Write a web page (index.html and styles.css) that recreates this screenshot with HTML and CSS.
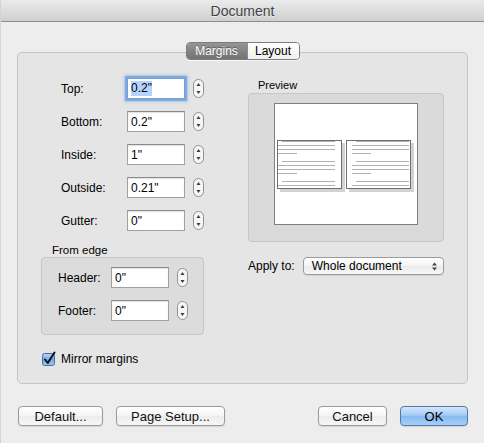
FILE: index.html
```html
<!DOCTYPE html>
<html>
<head>
<meta charset="utf-8">
<title>Document</title>
<link rel="stylesheet" href="styles.css">
</head>
<body>
<div class="window">
  <div class="titlebar">Document</div>
  <div class="body">
    <div class="tabs">
      <div class="seg">
        <div class="seg-item active">Margins</div>
        <div class="seg-item plain">Layout</div>
      </div>
    </div>
    <div class="tabbox">
      <div class="col-left">
        <div class="margin-rows">
          <div class="frow"><span class="lbl">Top:</span><div class="field focus"><span class="sel">0.2"</span></div><svg class="stepper" width="11" height="19" viewBox="0 0 11 19"><rect x="0.5" y="0.5" width="10" height="18" rx="5" class="st-body"/><polygon points="3.5,7 7.5,7 5.5,4" class="st-arr"/><polygon points="3.5,12 7.5,12 5.5,15" class="st-arr"/></svg></div>
          <div class="frow"><span class="lbl">Bottom:</span><div class="field">0.2"</div><svg class="stepper" width="11" height="19" viewBox="0 0 11 19"><rect x="0.5" y="0.5" width="10" height="18" rx="5" class="st-body"/><polygon points="3.5,7 7.5,7 5.5,4" class="st-arr"/><polygon points="3.5,12 7.5,12 5.5,15" class="st-arr"/></svg></div>
          <div class="frow"><span class="lbl">Inside:</span><div class="field">1"</div><svg class="stepper" width="11" height="19" viewBox="0 0 11 19"><rect x="0.5" y="0.5" width="10" height="18" rx="5" class="st-body"/><polygon points="3.5,7 7.5,7 5.5,4" class="st-arr"/><polygon points="3.5,12 7.5,12 5.5,15" class="st-arr"/></svg></div>
          <div class="frow"><span class="lbl">Outside:</span><div class="field">0.21"</div><svg class="stepper" width="11" height="19" viewBox="0 0 11 19"><rect x="0.5" y="0.5" width="10" height="18" rx="5" class="st-body"/><polygon points="3.5,7 7.5,7 5.5,4" class="st-arr"/><polygon points="3.5,12 7.5,12 5.5,15" class="st-arr"/></svg></div>
          <div class="frow"><span class="lbl">Gutter:</span><div class="field">0"</div><svg class="stepper" width="11" height="19" viewBox="0 0 11 19"><rect x="0.5" y="0.5" width="10" height="18" rx="5" class="st-body"/><polygon points="3.5,7 7.5,7 5.5,4" class="st-arr"/><polygon points="3.5,12 7.5,12 5.5,15" class="st-arr"/></svg></div>
        </div>
        <div class="group-label">From edge</div>
        <div class="group">
          <div class="frow"><span class="lbl small">Header:</span><div class="field">0"</div><svg class="stepper" width="11" height="19" viewBox="0 0 11 19"><rect x="0.5" y="0.5" width="10" height="18" rx="5" class="st-body"/><polygon points="3.5,7 7.5,7 5.5,4" class="st-arr"/><polygon points="3.5,12 7.5,12 5.5,15" class="st-arr"/></svg></div>
          <div class="frow"><span class="lbl small">Footer:</span><div class="field">0"</div><svg class="stepper" width="11" height="19" viewBox="0 0 11 19"><rect x="0.5" y="0.5" width="10" height="18" rx="5" class="st-body"/><polygon points="3.5,7 7.5,7 5.5,4" class="st-arr"/><polygon points="3.5,12 7.5,12 5.5,15" class="st-arr"/></svg></div>
        </div>
        <div class="check-row">
          <svg class="checkbox" width="14" height="14" viewBox="0 0 14 14">
            <defs><linearGradient id="cbg" x1="0" y1="0" x2="0" y2="1"><stop offset="0" stop-color="#b9d6f6"/><stop offset="0.5" stop-color="#74a9e8"/><stop offset="1" stop-color="#9cc7f3"/></linearGradient></defs>
            <rect x="0.5" y="1.5" width="12" height="12" rx="2" fill="url(#cbg)" stroke="#4c6e9f"/>
            <path d="M3 7.5 L5.8 11 L12.5 0.5" fill="none" stroke="#111" stroke-width="2" stroke-linejoin="round" stroke-linecap="round"/>
          </svg>
          <span>Mirror margins</span>
        </div>
      </div>
      <div class="col-right">
        <div class="preview-label">Preview</div>
        <div class="preview-box">
          <div class="sheet">
            <div class="page">
              <svg width="63" height="47" viewBox="0 0 63 47" class="lines">
                <path d="M4 0.5H57M0 4.5H57M0 8.5H57M0 12.5H19M4 20.5H57M0 24.5H57M0 28.5H57M0 32.5H19M4 40.5H57M0 44.5H57"/>
              </svg>
            </div>
            <div class="page">
              <svg width="63" height="47" viewBox="0 0 63 47" class="lines">
                <path d="M9 0.5H62M5 4.5H62M5 8.5H62M5 12.5H24M9 20.5H62M5 24.5H62M5 28.5H62M5 32.5H24M9 40.5H62M5 44.5H62"/>
              </svg>
            </div>
          </div>
        </div>
        <div class="apply-row">
          <span class="apply-lbl">Apply to:</span>
          <div class="popup">
            <span>Whole document</span>
            <svg width="5" height="9" viewBox="0 0 5 9" class="pop-arr"><polygon points="0,3.5 5,3.5 2.5,0.5"/><polygon points="0,5.5 5,5.5 2.5,8.5"/></svg>
          </div>
        </div>
      </div>
    </div>
    <div class="buttons">
      <div class="btn w-default">Default...</div>
      <div class="btn w-setup">Page Setup...</div>
      <div class="btn w-cancel">Cancel</div>
      <div class="btn w-ok primary">OK</div>
    </div>
  </div>
</div>
</body>
</html>
```

FILE: styles.css
```css
* { box-sizing: border-box; }
html, body { margin: 0; padding: 0; }
body {
  width: 484px;
  height: 443px;
  overflow: hidden;
  background: #ededed;
  font-family: "Liberation Sans", Arial, sans-serif;
  font-size: 12px;
  color: #000;
}
.window {
  height: 443px;
  border-left: 1px solid #d4d4d4;
}
.titlebar {
  height: 22px;
  border-bottom: 1px solid #8e8e8e;
  background: linear-gradient(#ebebeb, #cfcfcf);
  display: flex;
  justify-content: center;
  align-items: center;
  font-size: 14px;
  color: #434343;
  text-shadow: 0 1px 0 rgba(255,255,255,0.55);
}
.body {
  padding: 20px 16px 0 16px;
}
.tabs {
  display: flex;
  justify-content: center;
  position: relative;
  z-index: 1;
  height: 18px;
  margin-bottom: -8px;
}
.seg {
  display: flex;
  height: 18px;
  border: 1px solid #7d7d7d;
  border-radius: 4px;
  overflow: hidden;
  box-shadow: 0 1px 0 rgba(255,255,255,0.7);
}
.seg-item {
  display: flex;
  align-items: center;
  justify-content: center;
  font-size: 12px;
}
.seg-item.active {
  width: 60px;
  background: linear-gradient(#959595, #737373);
  color: #fff;
  text-shadow: 0 -1px 0 rgba(0,0,0,0.35);
}
.seg-item.plain {
  width: 52px;
  background: linear-gradient(#ffffff, #efefef);
  border-left: 1px solid #8c8c8c;
  color: #000;
}
.tabbox {
  height: 332px;
  border: 1px solid #c4c4c4;
  border-radius: 5px;
  background: #e5e5e5;
  display: flex;
  gap: 44px;
  padding: 25px 23px 0 23px;
}
.col-left {
  width: 163px;
  display: flex;
  flex-direction: column;
}
.margin-rows {
  display: flex;
  flex-direction: column;
  gap: 12px;
  padding-left: 20px;
}
.frow {
  display: flex;
  align-items: center;
  height: 21px;
}
.lbl {
  width: 66px;
  flex-shrink: 0;
}
.lbl.small {
  width: 53px;
}
.field {
  width: 58px;
  height: 21px;
  flex-shrink: 0;
  border: 1px solid #a0a0a0;
  border-top-color: #8a8a8a;
  background: #fff;
  box-shadow: inset 0 1px 1px rgba(0,0,0,0.12);
  padding-left: 3px;
  display: flex;
  align-items: center;
  font-size: 12px;
}
.field.focus {
  border-color: #7a9fd0;
  box-shadow: 0 0 1px 2px #7eaae0, 0 0 3px 3px rgba(126,170,224,0.45);
}
.sel {
  background: #b4d4fd;
  line-height: 15px;
}
.stepper {
  margin-left: 8px;
  flex-shrink: 0;
}
.st-body {
  fill: #f6f6f6;
  stroke: #8f8f8f;
}
.st-arr {
  fill: #3c3c3c;
}
.group-label {
  margin-top: 12px;
  padding-left: 11px;
  font-size: 11.5px;
  line-height: 14px;
}
.group {
  height: 78px;
  border: 1px solid #c6c6c6;
  border-radius: 4px;
  background: #dcdcdc;
  padding: 9px 0 0 16px;
  display: flex;
  flex-direction: column;
  gap: 12px;
}
.check-row {
  margin-top: 17px;
  display: flex;
  align-items: center;
  gap: 5px;
  padding-left: 1px;
  height: 14px;
}
.checkbox {
  overflow: visible;
}
.col-right {
  width: 196px;
  display: flex;
  flex-direction: column;
}
.preview-label {
  padding-left: 10px;
  font-size: 11px;
  line-height: 15px;
}
.preview-box {
  height: 149px;
  border: 1px solid #c6c6c6;
  border-radius: 4px;
  background: #dadada;
  padding-top: 9px;
  display: flex;
  justify-content: center;
  align-items: flex-start;
}
.sheet {
  width: 144px;
  height: 122px;
  border: 1px solid #808080;
  background: #fff;
  display: flex;
  gap: 4px;
  padding: 36px 0 0 2px;
}
.page {
  width: 65px;
  height: 49px;
  flex-shrink: 0;
  border: 1px solid #6e6e6e;
  background: #fff;
  box-shadow: 3px 3px 0 #d2d2d2;
}
.lines {
  display: block;
  shape-rendering: crispEdges;
}
.lines path {
  stroke: #b0b0b0;
  stroke-width: 1;
  fill: none;
}
.apply-row {
  margin-top: 15px;
  display: flex;
  align-items: center;
  gap: 8px;
  height: 18px;
}
.apply-lbl {
  width: 47px;
  white-space: nowrap;
}
.popup {
  width: 142px;
  height: 18px;
  border: 1px solid #9b9b9b;
  border-radius: 4px;
  background: linear-gradient(#ffffff, #f3f3f3 50%, #ebebeb 51%, #f7f7f7);
  box-shadow: 0 1px 1px rgba(0,0,0,0.08);
  padding: 0 6px 0 8px;
  display: flex;
  align-items: center;
  justify-content: space-between;
  font-size: 12px;
}
.pop-arr polygon {
  fill: #444;
}
.buttons {
  display: flex;
  gap: 13px;
  margin-top: 22px;
  padding-left: 1px;
}
.btn {
  height: 20px;
  border: 1px solid #9a9a9a;
  border-radius: 4px;
  background: linear-gradient(#ffffff, #f4f4f4 50%, #ececec 51%, #f7f7f7);
  box-shadow: 0 1px 1px rgba(0,0,0,0.1);
  display: flex;
  align-items: center;
  justify-content: center;
  font-size: 13px;
  color: #111;
}
.w-default { width: 85px; }
.w-setup { width: 109px; }
.w-cancel { width: 69px; margin-left: auto; }
.w-ok { width: 68px; }
.btn.primary {
  border-color: #5677a8;
  background: linear-gradient(#d3e6fb, #a6ccf4 45%, #88baf0 52%, #a5cff8);
  color: #000;
}
```
